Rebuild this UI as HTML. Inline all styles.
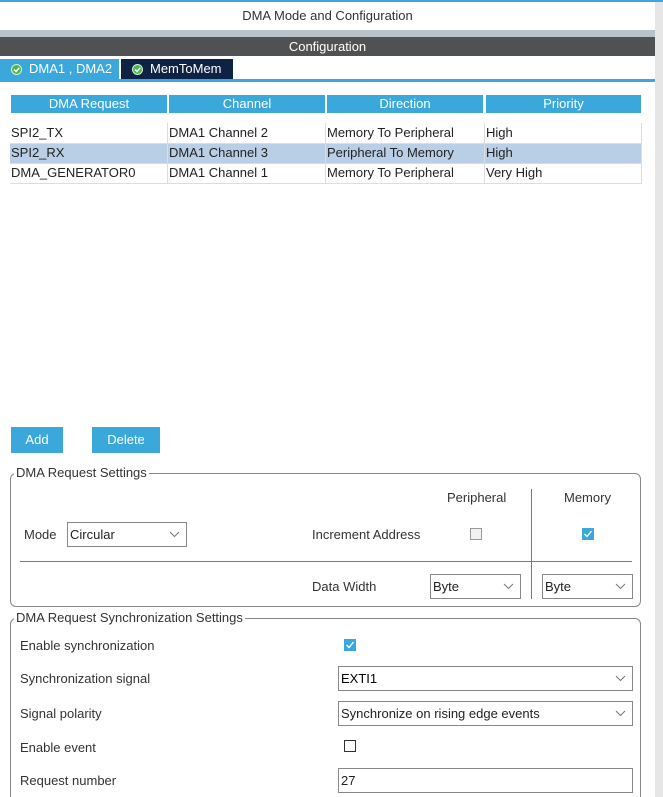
<!DOCTYPE html>
<html style="width:663px;height:797px;overflow:hidden"><head><style>
*{margin:0;padding:0;box-sizing:border-box}
body{width:663px;height:797px;overflow:hidden;background:#fff;font-family:"Liberation Sans",sans-serif;font-size:13px;color:#222;position:relative}
.a{position:absolute}
.hd{background:#3aa8db;color:#fff;text-align:center;line-height:18px;font-size:13px}
.cell{position:absolute;line-height:20px;white-space:nowrap;padding-left:1px}
.sel{position:absolute;border:1px solid #888;background:#fff;line-height:24px;padding-left:2px;font-size:13px}
.sel svg{position:absolute;right:6px;top:8px}
.fs{position:absolute;border:1px solid #888;border-radius:6px}
.lg{position:absolute;background:#fff;padding:0 2px;font-size:13px;color:#333}
.cb{position:absolute;width:12px;height:12px}
</style></head><body>
<div class="a" style="left:0;top:0;width:663px;height:2px;background:#3aa8db"></div>
<div class="a" style="left:0;top:2px;width:655px;height:28px;text-align:center;line-height:28px;color:#333">DMA Mode and Configuration</div>
<div class="a" style="left:0;top:30px;width:655px;height:7px;background:#b8c2c8"></div>
<div class="a" style="left:0;top:37px;width:655px;height:19px;background:#505152;color:#fff;text-align:center;line-height:19px">Configuration</div>
<div class="a" style="left:655px;top:2px;width:8px;height:795px;background:#e6e6e6"></div>
<div class="a" style="left:0;top:59px;width:119px;height:20px;background:#3aa8db;color:#fff;line-height:20px;padding-left:29px">DMA1 , DMA2</div>
<div class="a" style="left:121px;top:59px;width:112px;height:20px;background:#0e2244;color:#fff;line-height:20px;padding-left:29px">MemToMem</div>
<svg class="a" style="left:11px;top:64px" width="11" height="11"><circle cx="5.5" cy="5.5" r="5.5" fill="#d9f0d9"/><circle cx="5.5" cy="5.5" r="4.5" fill="#4cb84c"/><path d="M3 5.5l2 2 3.3-3.6" stroke="#fff" stroke-width="1.5" fill="none"/></svg>
<svg class="a" style="left:132px;top:64px" width="11" height="11"><circle cx="5.5" cy="5.5" r="5.5" fill="#d9f0d9"/><circle cx="5.5" cy="5.5" r="4.5" fill="#4cb84c"/><path d="M3 5.5l2 2 3.3-3.6" stroke="#fff" stroke-width="1.5" fill="none"/></svg>
<div class="a" style="left:0;top:79px;width:655px;height:3px;background:#3aa8db"></div>

<div class="a hd" style="left:11px;top:95px;width:156px">DMA Request</div>
<div class="a hd" style="left:169px;top:95px;width:156px">Channel</div>
<div class="a hd" style="left:327px;top:95px;width:156px">Direction</div>
<div class="a hd" style="left:486px;top:95px;width:155px">Priority</div>

<div class="a" style="left:10px;top:143px;width:632px;height:20px;background:#b8cfe6"></div>
<div class="a" style="left:10px;top:183px;width:632px;height:1px;background:#ddd"></div>
<div class="a" style="left:10px;top:143px;width:632px;height:1px;background:#ddd"></div>
<div class="a" style="left:10px;top:163px;width:632px;height:1px;background:#ddd"></div>
<div class="a" style="left:167px;top:123px;width:1px;height:60px;background:#ddd"></div>
<div class="a" style="left:325px;top:123px;width:1px;height:60px;background:#ddd"></div>
<div class="a" style="left:484px;top:123px;width:1px;height:60px;background:#ddd"></div>
<div class="a" style="left:641px;top:123px;width:1px;height:60px;background:#ddd"></div>
<div class="cell" style="left:10px;top:123px">SPI2_TX</div><div class="cell" style="left:168px;top:123px">DMA1 Channel 2</div><div class="cell" style="left:326px;top:123px">Memory To Peripheral</div><div class="cell" style="left:485px;top:123px">High</div>
<div class="cell" style="left:10px;top:143px">SPI2_RX</div><div class="cell" style="left:168px;top:143px">DMA1 Channel 3</div><div class="cell" style="left:326px;top:143px">Peripheral To Memory</div><div class="cell" style="left:485px;top:143px">High</div>
<div class="cell" style="left:10px;top:163px">DMA_GENERATOR0</div><div class="cell" style="left:168px;top:163px">DMA1 Channel 1</div><div class="cell" style="left:326px;top:163px">Memory To Peripheral</div><div class="cell" style="left:485px;top:163px">Very High</div>

<div class="a" style="left:11px;top:427px;width:52px;height:26px;background:#3aa8db;color:#fff;text-align:center;line-height:26px">Add</div>
<div class="a" style="left:92px;top:427px;width:68px;height:26px;background:#3aa8db;color:#fff;text-align:center;line-height:26px">Delete</div>

<div class="fs" style="left:10px;top:473px;width:631px;height:134px"></div>
<div class="lg" style="left:14px;top:465px">DMA Request Settings</div>
<div class="a" style="left:447px;top:490px;color:#333">Peripheral</div>
<div class="a" style="left:564px;top:490px;color:#333">Memory</div>
<div class="a" style="left:531px;top:489px;width:1px;height:110px;background:#5b7fc4"></div>
<div class="a" style="left:20px;top:561px;width:612px;height:1px;background:#5b7fc4"></div>
<div class="a" style="left:24px;top:527px;color:#333">Mode</div>
<div class="sel" style="left:67px;top:522px;width:120px;height:25px">Circular<svg width="11" height="7"><path d="M1 1l4.5 4.5L10 1" stroke="#777" fill="none"/></svg></div>
<div class="a" style="left:312px;top:527px;color:#333">Increment Address</div>
<div class="cb" style="left:470px;top:528px;border:1px solid #999;background:#f2f2f2"></div>
<svg class="cb" style="left:582px;top:528px" width="12" height="12"><rect width="12" height="12" fill="#3aa8db"/><path d="M2.5 6l2.5 2.5 4.5-5.5" stroke="#fff" stroke-width="1.3" fill="none"/></svg>
<div class="a" style="left:312px;top:579px;color:#333">Data Width</div>
<div class="sel" style="left:430px;top:574px;width:91px;height:25px">Byte<svg width="11" height="7"><path d="M1 1l4.5 4.5L10 1" stroke="#777" fill="none"/></svg></div>
<div class="sel" style="left:542px;top:574px;width:91px;height:25px">Byte<svg width="11" height="7"><path d="M1 1l4.5 4.5L10 1" stroke="#777" fill="none"/></svg></div>

<div class="fs" style="left:10px;top:618px;width:631px;height:190px"></div>
<div class="lg" style="left:14px;top:610px">DMA Request Synchronization Settings</div>
<div class="a" style="left:20px;top:638px;color:#333">Enable synchronization</div>
<svg class="cb" style="left:344px;top:639px" width="12" height="12"><rect width="12" height="12" fill="#3aa8db"/><path d="M2.5 6l2.5 2.5 4.5-5.5" stroke="#fff" stroke-width="1.3" fill="none"/></svg>
<div class="a" style="left:20px;top:671px;color:#333">Synchronization signal</div>
<div class="sel" style="left:338px;top:666px;width:295px;height:25px;color:#000">EXTI1<svg width="11" height="7"><path d="M1 1l4.5 4.5L10 1" stroke="#777" fill="none"/></svg></div>
<div class="a" style="left:20px;top:706px;color:#333">Signal polarity</div>
<div class="sel" style="left:338px;top:701px;width:295px;height:25px">Synchronize on rising edge events<svg width="11" height="7"><path d="M1 1l4.5 4.5L10 1" stroke="#777" fill="none"/></svg></div>
<div class="a" style="left:20px;top:740px;color:#333">Enable event</div>
<div class="cb" style="left:344px;top:740px;border:1px solid #333;background:#fff"></div>
<div class="a" style="left:20px;top:773px;color:#333">Request number</div>
<div class="sel" style="left:338px;top:768px;width:295px;height:25px">27</div>
</body></html>
